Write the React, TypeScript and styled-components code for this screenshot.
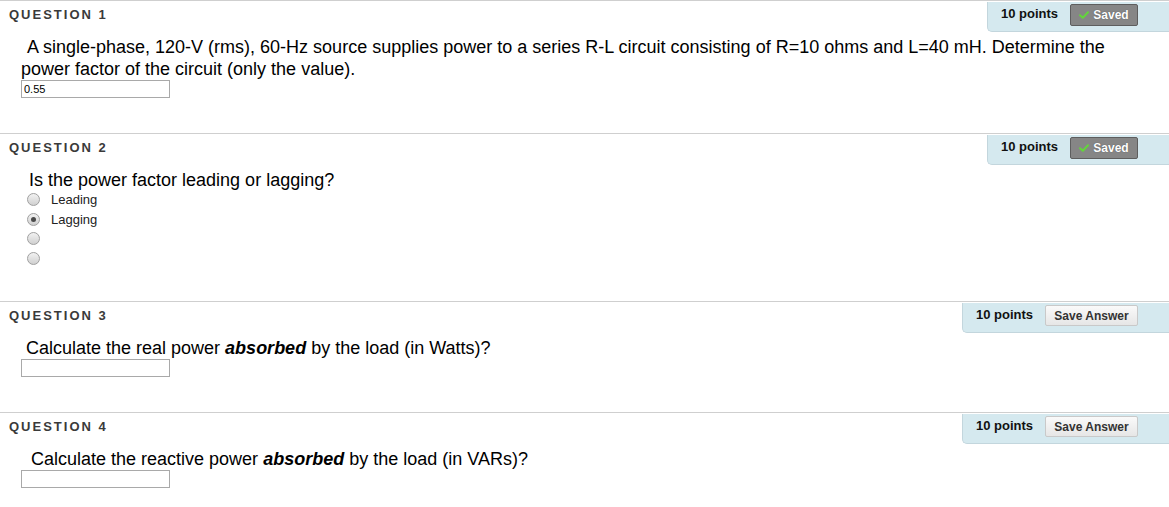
import React from "react";
import styled, { createGlobalStyle } from "styled-components";

const GlobalStyle = createGlobalStyle`
  html, body {
    margin: 0;
    padding: 0;
    background: #fff;
    font-family: "Liberation Sans", Arial, sans-serif;
  }
`;

interface QuestionData {
  number: number;
  saved: boolean;
  indent: number;
  prompt: React.ReactNode;
  kind: "text" | "radio";
  value?: string;
}

const questions: QuestionData[] = [
  {
    number: 1,
    saved: true,
    indent: 6,
    kind: "text",
    value: "0.55",
    prompt: (
      <>
        A single-phase, 120-V (rms), 60-Hz source supplies power to a series R-L circuit
        consisting of R=10 ohms and L=40 mH. Determine the power factor of the circuit (only the
        value).
      </>
    ),
  },
  {
    number: 2,
    saved: true,
    indent: 8,
    kind: "radio",
    prompt: <>Is the power factor leading or lagging?</>,
  },
  {
    number: 3,
    saved: false,
    indent: 5,
    kind: "text",
    prompt: (
      <>
        Calculate the real power <b><i>absorbed</i></b> by the load (in Watts)?
      </>
    ),
  },
  {
    number: 4,
    saved: false,
    indent: 10,
    kind: "text",
    prompt: (
      <>
        Calculate the reactive power <b><i>absorbed</i></b> by the load (in VARs)?
      </>
    ),
  },
];

const radioOptions = [
  { label: "Leading", checked: false },
  { label: "Lagging", checked: true },
  { label: "", checked: false },
  { label: "", checked: false },
];

const Check = () => (
  <svg width="10" height="8" viewBox="0 0 10 8">
    <path
      d="M1 4.2 L3.8 6.8 L9 1.2"
      fill="none"
      stroke="#63d43c"
      strokeWidth="2"
      strokeLinecap="round"
      strokeLinejoin="round"
    />
  </svg>
);

const QuestionBlock: React.FC<{ q: QuestionData }> = ({ q }) => (
  <Question>
    <Header>
      <Heading>QUESTION {q.number}</Heading>
      <PointsPanel>
        <Points>10 points</Points>
        {q.saved ? (
          <SavedButton>
            <Check />
            Saved
          </SavedButton>
        ) : (
          <SaveButton>Save Answer</SaveButton>
        )}
      </PointsPanel>
    </Header>
    <Body>
      <Prompt $indent={q.indent}>{q.prompt}</Prompt>
      {q.kind === "text" ? (
        <AnswerInput defaultValue={q.value ?? ""} />
      ) : (
        <RadioList>
          {radioOptions.map((o, i) => (
            <RadioRow key={i}>
              <Radio $checked={o.checked} />
              <RadioLabel>{o.label}</RadioLabel>
            </RadioRow>
          ))}
        </RadioList>
      )}
    </Body>
  </Question>
);

export default function App() {
  return (
    <>
      <GlobalStyle />
      <Page>
        {questions.map((q) => (
          <QuestionBlock key={q.number} q={q} />
        ))}
      </Page>
    </>
  );
}

const Page = styled.div`
  width: 1169px;
`;

const Question = styled.section`
  border-top: 1px solid #cfcfcf;
`;

const Header = styled.div`
  display: flex;
  justify-content: space-between;
  align-items: flex-start;
  height: 32px;
  padding-top: 1px;
  box-sizing: border-box;
`;

const Heading = styled.h2`
  margin: 5px 0 0 9px;
  font-size: 13px;
  line-height: 15px;
  font-weight: bold;
  letter-spacing: 2px;
  color: #3a3a3a;
`;

const PointsPanel = styled.div`
  display: flex;
  align-items: flex-start;
  gap: 12px;
  height: 30px;
  box-sizing: border-box;
  padding: 2px 31px 0 13px;
  background: #d5e9ef;
  border-left: 1px solid #c3d6dd;
  border-bottom: 1px solid #c3d6dd;
  border-bottom-left-radius: 5px;
`;

const Points = styled.span`
  padding-top: 1px;
  font-size: 13px;
  line-height: 18px;
  font-weight: bold;
  color: #111;
`;

const SavedButton = styled.div`
  display: flex;
  align-items: center;
  justify-content: center;
  gap: 4px;
  width: 68px;
  height: 22px;
  box-sizing: border-box;
  background: #868686;
  border: 1px solid #5e5e5e;
  border-radius: 2px;
  font-size: 12px;
  font-weight: bold;
  color: #fff;
  text-shadow: 0 0 1px #4a4a4a;
`;

const SaveButton = styled.div`
  display: flex;
  align-items: center;
  justify-content: center;
  width: 93px;
  height: 21px;
  box-sizing: border-box;
  background: linear-gradient(#fafafa, #e6e6e6);
  border: 1px solid #c9c9c9;
  border-radius: 2px;
  font-size: 12px;
  font-weight: bold;
  color: #333;
`;

const Body = styled.div`
  padding: 3px 0 35px 21px;
`;

const Prompt = styled.div<{ $indent: number }>`
  width: 1110px;
  font-size: 18px;
  line-height: 22px;
  color: #000;
  text-indent: ${(p) => p.$indent}px;
`;

const AnswerInput = styled.input`
  display: block;
  width: 149px;
  height: 18px;
  box-sizing: border-box;
  margin: 0;
  padding: 0 2px;
  border: 1px solid #a9a9a9;
  font-family: "Liberation Sans", Arial, sans-serif;
  font-size: 11px;
  color: #000;
  outline: none;
`;

const RadioList = styled.div`
  display: flex;
  flex-direction: column;
  margin: -1px 0 -2px;
`;

const RadioRow = styled.div`
  display: flex;
  align-items: center;
  height: 19.5px;
`;

const Radio = styled.span<{ $checked: boolean }>`
  position: relative;
  width: 13px;
  height: 13px;
  margin-left: 6px;
  box-sizing: border-box;
  border-radius: 50%;
  border: 1px solid #a0a0a0;
  background: linear-gradient(#f2f2f2, #d0d0d0);
  &::after {
    content: "";
    display: ${(p) => (p.$checked ? "block" : "none")};
    position: absolute;
    left: 3px;
    top: 3px;
    width: 5px;
    height: 5px;
    border-radius: 50%;
    background: #4a4a4a;
  }
`;

const RadioLabel = styled.span`
  margin-left: 11px;
  font-size: 13px;
  color: #222;
`;
